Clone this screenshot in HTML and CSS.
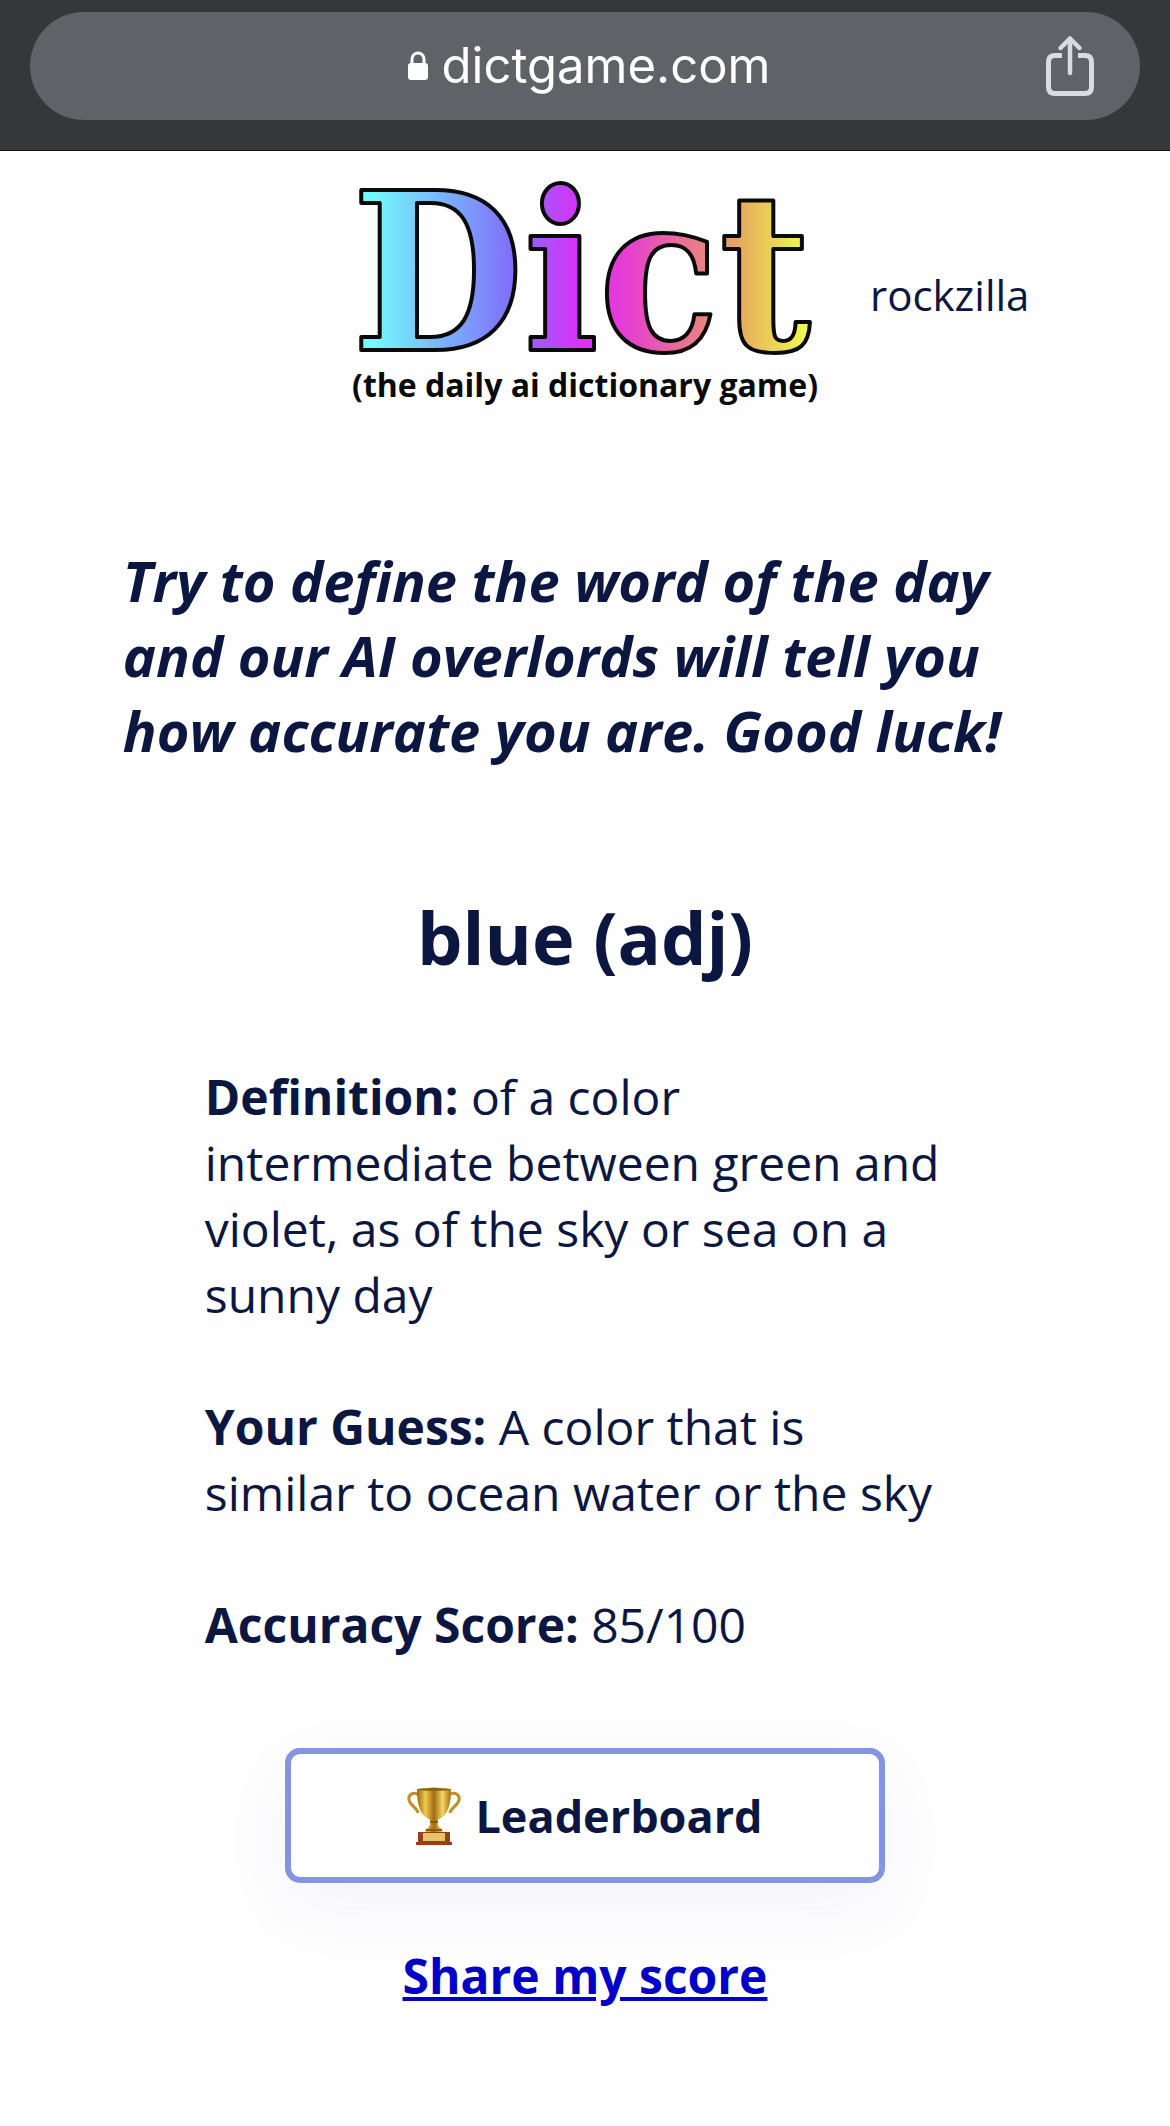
FILE: index.html
```html
<!DOCTYPE html>
<html lang="en">
  <head>
    <meta charset="UTF-8" />
    <meta name="viewport" content="width=device-width, initial-scale=1.0" />
    <title>Dict</title>
    <link rel="stylesheet" href="styles.css">
  </head>
  <body>
    <div class="browser-bar">
      <div class="address">
        <div class="url">
          <svg class="lock" viewBox="0 0 20 30" aria-hidden="true">
            <path d="M4 14V8a6 6 0 0 1 12 0v6" fill="none" stroke="#fff" stroke-width="3" />
            <rect y="12" width="20" height="17" rx="3" fill="#fff" />
          </svg>
          <span>dictgame.com</span>
        </div>
        <button class="share-btn" aria-label="Share">
          <svg viewBox="0 0 48 62" fill="none" stroke="#d9dbe1" stroke-width="5">
            <path d="M16 20.500H9q-6.500 0-6.500 6.500v25q0 6.500 6.500 6.500h30q6.500 0 6.500-6.500V27q0-6.500-6.500-6.500h-7" />
            <path d="M24 38V4M14.500 13L24 3.500l9.500 9.500" stroke-width="4.500" stroke-linecap="round" stroke-linejoin="round" />
          </svg>
        </button>
      </div>
    </div>

    <header class="header">
      <div class="logo">
        <svg class="logo-word" viewBox="0 0 480 180">
          <defs>
            <linearGradient id="rainbow" gradientUnits="userSpaceOnUse" x1="10" y1="0" x2="465" y2="0">
              <stop offset="0.040" stop-color="#73f9fd" />
              <stop offset="0.340" stop-color="#8070fb" />
              <stop offset="0.500" stop-color="#dc2ff8" />
              <stop offset="0.600" stop-color="#e63fcf" />
              <stop offset="0.780" stop-color="#e9887a" />
              <stop offset="0.850" stop-color="#e6ad5d" />
              <stop offset="1" stop-color="#f0ff4a" />
            </linearGradient>
          </defs>
          <text x="7" y="169">Dict</text>
        </svg>
        <p class="tagline">(the daily ai dictionary game)</p>
      </div>
      <p class="username">rockzilla</p>
    </header>

    <main>
      <h2 class="intro">Try to define the word of the day and our AI overlords will tell you how accurate you are. Good luck!</h2>
      <h1 class="word">blue (adj)</h1>
      <div class="result">
        <p><b>Definition:</b> of a color intermediate between green and violet, as of the sky or sea on a sunny day</p>
        <p><b>Your Guess:</b> A color that is similar to ocean water or the sky</p>
        <p><b>Accuracy Score:</b> 85/100</p>
      </div>
      <button class="leaderboard">
        <svg class="trophy" viewBox="0 0 54 58" aria-hidden="true">
          <defs>
            <linearGradient id="gold">
              <stop offset="0" stop-color="#9a6a10" />
              <stop offset="0.250" stop-color="#f0c84e" />
              <stop offset="0.500" stop-color="#a06c10" />
              <stop offset="0.750" stop-color="#f3d566" />
              <stop offset="1" stop-color="#a36f10" />
            </linearGradient>
          </defs>
          <path d="M12 8C6 4 1 8 2 13c1 6 8 7 9 13M42 8c6-4 11 0 10 5-1 6-8 7-9 13" fill="none" stroke="#c2902a" stroke-width="3" />
          <path d="M10 2q17-3 34 0c0 16-3 26-12 30-2 2-2 5 0 8l4 3v3H18v-3l4-3c2-3 2-6 0-8C13 28 10 18 10 2z" fill="url(#gold)" />
          <ellipse cx="27" cy="2.500" rx="16" ry="1.500" fill="#8a6014" />
          <path d="M23 35h8M19 43h16" stroke="#8a5c0c" stroke-width="2" />
          <path d="M11 45h32v10h2v3H9v-3h2z" fill="#95401a" />
          <rect x="16" y="46" width="22" height="8" fill="#e8c468" />
        </svg>
        Leaderboard
      </button>
      <a class="share-link" href="#">Share my score</a>
    </main>
  </body>
</html>
```
FILE: styles.css
```css
* {
  box-sizing: border-box;
}
body {
  margin: 0;
  font-family: "Open Sans", sans-serif;
  font-size: 48px;
  line-height: 66px;
  color: #0b1641;
  background-color: #fefefe;
}
h1,
h2,
p {
  margin: 0;
}
button {
  font-family: inherit;
  cursor: pointer;
}
.browser-bar {
  padding: 12px 30px 30px;
  background-color: #363739;
  border-bottom: 1px solid #111;
}
.address {
  display: grid;
  grid-template-columns: 1fr auto 1fr;
  align-items: center;
  height: 108px;
  padding: 0 46px;
  border-radius: 54px;
  background-color: #5f6266;
}
.url {
  grid-column: 2;
  display: flex;
  align-items: center;
  gap: 14px;
  padding-left: 8px;
  font-family: Inter, sans-serif;
  font-size: 49px;
  line-height: 62px;
  color: #fff;
}
.lock {
  width: 20px;
  height: 30px;
}
.share-btn {
  justify-self: end;
  padding: 0;
  border: none;
  background: none;
}
.share-btn svg {
  display: block;
  width: 48px;
  height: 62px;
}
.header {
  display: grid;
  grid-template-columns: 1fr auto 1fr;
  align-items: center;
  gap: 45px;
  padding-top: 30px;
}
.logo {
  grid-column: 2;
  width: 480px;
  text-align: center;
}
.logo-word {
  display: block;
  width: 100%;
  overflow: visible;
}
.logo-word text {
  font-family: "DejaVu Serif Condensed", "DejaVu Serif", serif;
  font-size: 220px;
  font-weight: bold;
  fill: url(#rainbow);
  stroke: #0a0a0a;
  stroke-width: 4px;
  stroke-linejoin: round;
}
.tagline {
  font-size: 32px;
  font-weight: bold;
  line-height: 48px;
  color: #0a0a0a;
}
.username {
  font-size: 42px;
}
main {
  display: flex;
  flex-direction: column;
  align-items: center;
  padding-bottom: 100px;
}
.intro {
  width: 79%;
  margin-top: 134px;
  font-size: 56px;
  font-style: italic;
  line-height: 75px;
}
.word {
  margin-top: 120px;
  font-size: 72px;
  line-height: 98px;
}
.result {
  display: flex;
  flex-direction: column;
  gap: 66px;
  width: 65%;
  margin-top: 78px;
}
.leaderboard {
  display: flex;
  align-items: center;
  justify-content: center;
  gap: 14px;
  width: 600px;
  max-width: 100%;
  height: 135px;
  margin-top: 90px;
  border: 6px solid #8494e0;
  border-radius: 15px;
  background-color: #fff;
  box-shadow: 0 24px 72px rgba(80, 70, 200, 0.05);
  font-size: 45px;
  font-weight: bold;
  color: #0b1641;
}
.trophy {
  width: 54px;
  height: 58px;
}
.share-link {
  margin-top: 60px;
  font-weight: bold;
  color: #0000c8;
}
```
